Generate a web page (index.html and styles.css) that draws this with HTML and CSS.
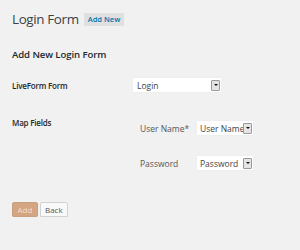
FILE: index.html
```html
<!DOCTYPE html>
<html lang="en">

<head>
	<meta charset="utf-8">
	<title>Login Form</title>
	<link rel="stylesheet" href="styles.css">
</head>

<body>
	<div class="wrap">
		<header class="titel">
			<h1>Login Form</h1>
			<a class="add-new">Add New</a>
		</header>

		<h2>Add New Login Form</h2>

		<div class="row row-form">
			<div class="label">LiveForm Form</div>
			<div class="select wide">
				<span class="value">Login</span>
				<span class="arrow"><span class="tri"></span></span>
			</div>
		</div>

		<div class="row row-map">
			<div class="label">Map Fields</div>
			<div class="fields">
				<div class="field">
					<span class="field-label">User Name*</span>
					<div class="select small">
						<span class="value">User Name</span>
						<span class="arrow"><span class="tri"></span></span>
					</div>
				</div>
				<div class="field">
					<span class="field-label">Password</span>
					<div class="select small">
						<span class="value">Password</span>
						<span class="arrow"><span class="tri"></span></span>
					</div>
				</div>
			</div>
		</div>

		<div class="knapper">
			<button class="btn primary">Add</button>
			<button class="btn">Back</button>
		</div>
	</div>
</body>

</html>
```

FILE: styles.css
```css
*,
body * {
	box-sizing: border-box;
}

body {
	margin: 0;
	padding: 0;
	background-color: #f1f1f1;
	font-family: 'Open Sans', sans-serif;
	color: #23282d;
}

.wrap {
	padding: 7px 12px 0 12px;
}

.titel {
	display: flex;
	align-items: center;
	height: 24px;
}

h1 {
	margin: 0;
	font-size: 13.4px;
	font-weight: 400;
	line-height: 24px;
	letter-spacing: -0.35px;
	color: #3c4146;
}

.add-new {
	margin-left: 5px;
	margin-top: 1px;
	padding: 0 4px;
	height: 13px;
	line-height: 13px;
	font-size: 7.5px;
	font-weight: 600;
	color: #0073aa;
	background-color: #e0e0e0;
}

h2 {
	margin: 17px 0 0 0;
	font-size: 9.6px;
	font-weight: 600;
	line-height: 14px;
	letter-spacing: -0.1px;
	color: #23282d;
}

.row {
	display: flex;
}

.label {
	width: 121px;
	font-size: 8px;
	font-weight: 600;
	letter-spacing: -0.2px;
	color: #23282d;
}

.row-form {
	margin-top: 16px;
	align-items: center;
}

.select {
	display: flex;
	align-items: center;
	height: 14px;
	padding: 0 1px 0 4px;
	background-color: #ffffff;
	box-shadow: 0 0 1px rgba(0, 0, 0, 0.08);
	font-size: 8.5px;
	color: #444;
}

.value {
	flex: 1;
	white-space: nowrap;
	overflow: hidden;
}

.select.wide {
	width: 88px;
}

.select.small {
	width: 56px;
	padding-left: 3px;
}

.arrow {
	display: flex;
	flex: none;
	align-items: center;
	justify-content: center;
	width: 9px;
	height: 11px;
	background-color: #e4e4e4;
	border: 1px solid #9a9a9a;
	border-radius: 1px;
}

.tri {
	width: 0;
	height: 0;
	border-left: 2px solid transparent;
	border-right: 2px solid transparent;
	border-top: 2px solid #111;
}

.row-map {
	margin-top: 25px;
}

.fields {
	padding-top: 4px;
	padding-left: 7px;
}

.field {
	display: flex;
	align-items: center;
	margin-bottom: 21px;
}

.field-label {
	width: 57px;
	font-size: 8.5px;
	color: #555;
}

.knapper {
	display: flex;
	gap: 2px;
	margin-top: 11px;
}

.btn {
	height: 15px;
	padding: 0 4px;
	font-family: 'Open Sans', sans-serif;
	font-size: 8px;
	line-height: 13px;
	color: #555;
	background-color: #f9f9f9;
	border: 1px solid #d2d2d2;
	border-radius: 2px;
	box-shadow: 0 1px 0 #ddd;
}

.btn.primary {
	width: 26px;
	color: #f2dfd0;
	background-color: #d3a582;
	border-color: #c9a07f;
}
```
